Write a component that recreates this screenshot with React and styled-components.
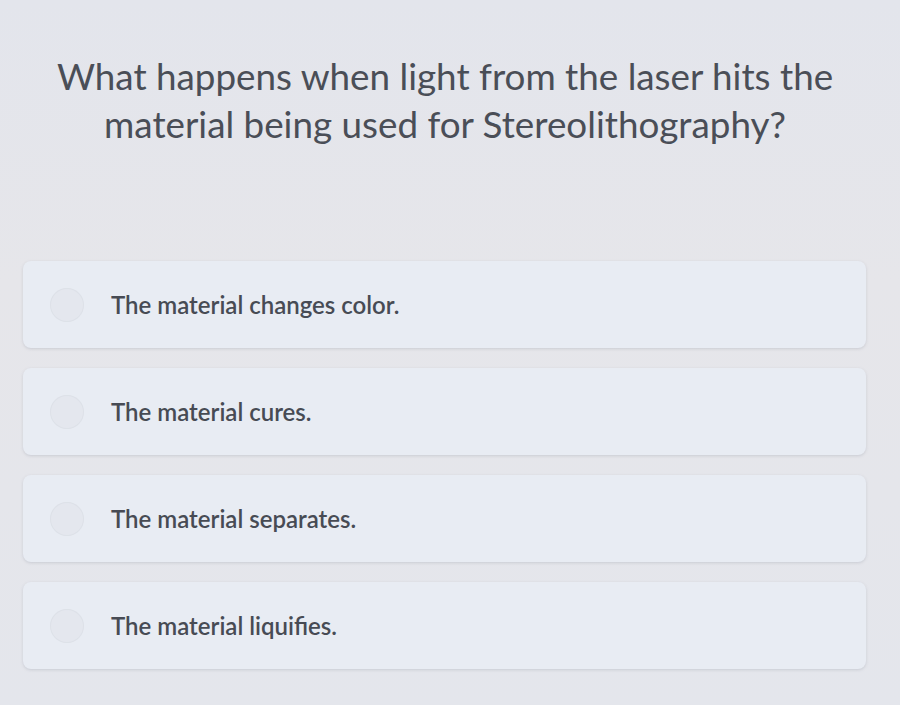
import React from 'react';
import styled, { createGlobalStyle } from 'styled-components';

const GlobalStyle = createGlobalStyle`
  html, body {
    margin: 0;
    padding: 0;
  }
  body {
    background: linear-gradient(180deg, #e3e5ec 0%, #e6e6ea 40%, #e4e6ec 100%);
    font-family: Lato, "Open Sans", sans-serif;
    min-height: 705px;
  }
`;

const Page = styled.div`
  width: 900px;
  height: 705px;
  box-sizing: border-box;
  padding-top: 52px;
  display: flex;
  flex-direction: column;
`;

const Question = styled.h1`
  margin: 0;
  padding-right: 10px;
  text-align: center;
  font-size: 36.8px;
  line-height: 48px;
  font-weight: 400;
  color: #4a4e57;
`;

const OptionList = styled.div`
  margin-top: 113px;
  padding: 0 34px 0 23px;
  display: flex;
  flex-direction: column;
  gap: 20px;
`;

const Option = styled.label`
  display: flex;
  align-items: center;
  height: 87px;
  padding-left: 27px;
  border-radius: 8px;
  background: #e8ecf3;
  box-shadow: 0 1px 3px rgba(120, 125, 140, 0.25);
  cursor: pointer;
`;

const Radio = styled.span`
  width: 34px;
  height: 34px;
  border-radius: 50%;
  background: #e4e7ee;
  box-shadow: inset 0 0 0 1px #dde1e8;
  flex-shrink: 0;
`;

const OptionText = styled.span`
  margin-left: 27px;
  font-size: 24px;
  font-weight: 600;
  color: #474b54;
`;

const options = [
  'The material changes color.',
  'The material cures.',
  'The material separates.',
  'The material liquifies.',
];

export default function App() {
  return (
    <>
      <GlobalStyle />
      <Page>
        <Question>
          What happens when light from the laser hits the
          <br />
          material being used for Stereolithography?
        </Question>
        <OptionList>
          {options.map((text) => (
            <Option key={text}>
              <Radio />
              <OptionText>{text}</OptionText>
            </Option>
          ))}
        </OptionList>
      </Page>
    </>
  );
}
